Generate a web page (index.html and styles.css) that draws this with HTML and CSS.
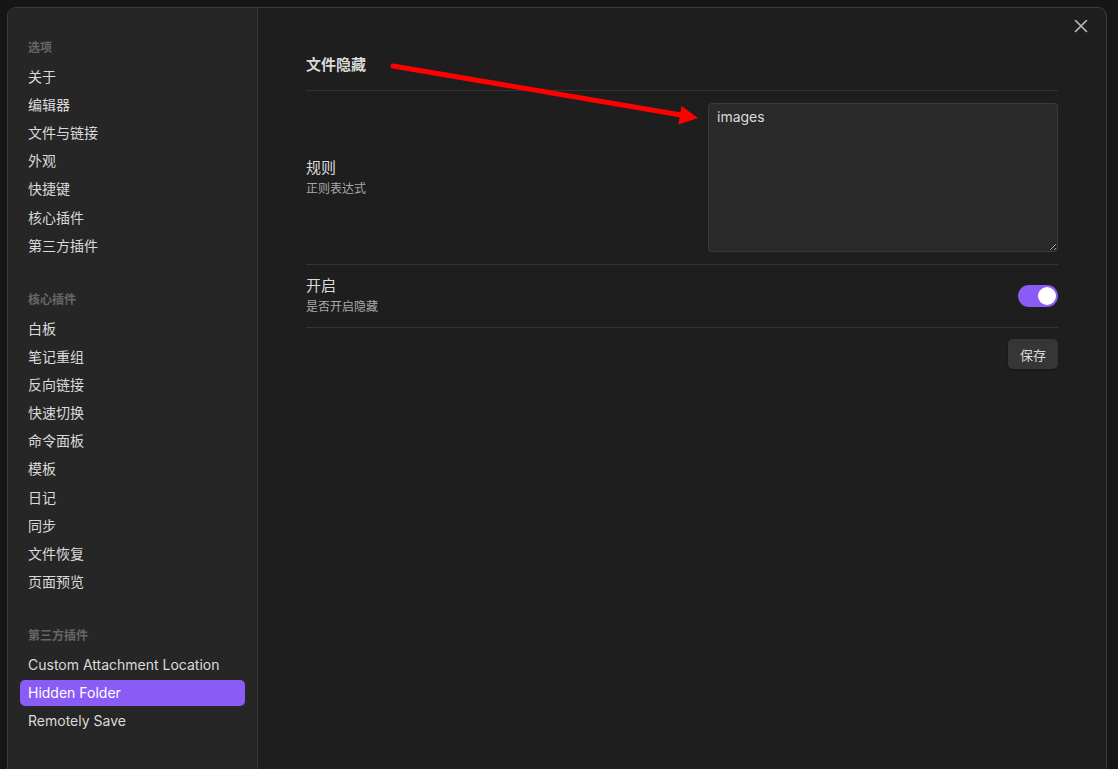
FILE: index.html
```html
<!DOCTYPE html>
<html lang="zh">
<head>
<meta charset="utf-8">
<title>设置</title>
<link rel="stylesheet" href="styles.css">
</head>
<body>
<div class="modal">
  <nav class="sidebar">
    <div class="group">
      <div class="group-title">选项</div>
      <div class="nav-item">关于</div>
      <div class="nav-item">编辑器</div>
      <div class="nav-item">文件与链接</div>
      <div class="nav-item">外观</div>
      <div class="nav-item">快捷键</div>
      <div class="nav-item">核心插件</div>
      <div class="nav-item">第三方插件</div>
    </div>
    <div class="group">
      <div class="group-title">核心插件</div>
      <div class="nav-item">白板</div>
      <div class="nav-item">笔记重组</div>
      <div class="nav-item">反向链接</div>
      <div class="nav-item">快速切换</div>
      <div class="nav-item">命令面板</div>
      <div class="nav-item">模板</div>
      <div class="nav-item">日记</div>
      <div class="nav-item">同步</div>
      <div class="nav-item">文件恢复</div>
      <div class="nav-item">页面预览</div>
    </div>
    <div class="group">
      <div class="group-title">第三方插件</div>
      <div class="nav-item">Custom Attachment Location</div>
      <div class="nav-item active">Hidden Folder</div>
      <div class="nav-item">Remotely Save</div>
    </div>
  </nav>
  <main class="content">
    <div class="close" aria-label="关闭">
      <svg width="14" height="14" viewBox="0 0 14 14"><path d="M1.5 1.5 L12.5 12.5 M12.5 1.5 L1.5 12.5" stroke="#bdbdbd" stroke-width="1.6" stroke-linecap="round" fill="none"/></svg>
    </div>
    <div class="heading">文件隐藏</div>
    <div class="setting">
      <div class="info">
        <div class="name">规则</div>
        <div class="desc">正则表达式</div>
      </div>
      <div class="control">
        <textarea class="rules">images</textarea>
      </div>
    </div>
    <div class="setting">
      <div class="info">
        <div class="name">开启</div>
        <div class="desc">是否开启隐藏</div>
      </div>
      <div class="control">
        <div class="toggle"><div class="knob"></div></div>
      </div>
    </div>
    <div class="setting no-info">
      <div class="control">
        <button class="btn">保存</button>
      </div>
    </div>
  </main>
</div>
<svg class="annotation" width="1118" height="769" viewBox="0 0 1118 769">
  <line x1="393" y1="66" x2="684" y2="115.5" stroke="#ff0000" stroke-width="5" stroke-linecap="round"/>
  <polygon points="698,118 681.5,106 678.5,124.5" fill="#ff0000"/>
</svg>
</body>
</html>
```

FILE: styles.css
```css
* { box-sizing: border-box; }

html, body {
  margin: 0;
  padding: 0;
  height: 100%;
  overflow: hidden;
}

body {
  background: #161616;
  font-family: Inter, "Noto Sans CJK SC", sans-serif;
  color: #dadada;
  position: relative;
}

.modal {
  margin: 7px 0 0 7px;
  width: 1100px;
  height: 800px;
  border: 1px solid #3c3c3c;
  border-radius: 9px;
  display: flex;
  overflow: hidden;
  background: #1e1e1e;
}

.sidebar {
  width: 250px;
  flex: none;
  background: #262626;
  border-right: 1px solid #343434;
  padding: 31px 12px 0 12px;
}

.group { margin-bottom: 32.35px; }

.group-title {
  font-size: 12px;
  line-height: 18px;
  height: 18px;
  font-weight: 600;
  color: #666666;
  padding-left: 8px;
  margin-bottom: 6.8px;
}

.nav-item {
  height: 26px;
  line-height: 26px;
  font-size: 14px;
  padding: 0 8px;
  margin-bottom: 2.15px;
  border-radius: 5px;
  color: #dadada;
  white-space: nowrap;
}

.nav-item.active {
  background: #8a5cf5;
  color: #ffffff;
}

.content {
  flex: 1;
  position: relative;
  padding: 37px 48px 0 48px;
}

.close {
  position: absolute;
  top: 6px;
  right: 13px;
  width: 24px;
  height: 24px;
  display: flex;
  align-items: center;
  justify-content: center;
}

.heading {
  font-size: 15px;
  font-weight: 600;
  line-height: 20px;
  padding: 10px 0 15px 0;
  color: #dadada;
}

.setting {
  display: flex;
  align-items: center;
  border-top: 1px solid #333333;
  padding: 12px 0;
}

.info { flex: 1; }

.name {
  font-size: 15px;
  line-height: 18px;
  color: #dadada;
}

.desc {
  font-size: 12px;
  line-height: 16px;
  margin-top: 4px;
  color: #a8a8a8;
}

.control {
  display: flex;
  justify-content: flex-end;
  flex: 1;
}

.rules {
  width: 350px;
  height: 149px;
  background: #2a2a2a;
  border: 1px solid #3a3a3a;
  border-radius: 4px;
  color: #dadada;
  font-family: Inter, "Noto Sans CJK SC", sans-serif;
  font-size: 14px;
  line-height: 20px;
  padding: 3px 8px;
  resize: vertical;
  outline: none;
  display: block;
}

.toggle {
  width: 40px;
  height: 22px;
  border-radius: 11px;
  background: #8a5cf5;
  position: relative;
}

.knob {
  position: absolute;
  top: 2px;
  right: 2px;
  width: 18px;
  height: 18px;
  border-radius: 50%;
  background: #ffffff;
}

.no-info { padding-top: 11px; }

.btn {
  height: 30px;
  padding: 0 12px;
  background: #363636;
  border: none;
  border-radius: 5px;
  color: #dadada;
  font-family: Inter, "Noto Sans CJK SC", sans-serif;
  font-size: 13px;
  box-shadow: 0 1px 2px rgba(0,0,0,0.3);
}

.annotation {
  position: absolute;
  top: 0;
  left: 0;
  pointer-events: none;
}
```
